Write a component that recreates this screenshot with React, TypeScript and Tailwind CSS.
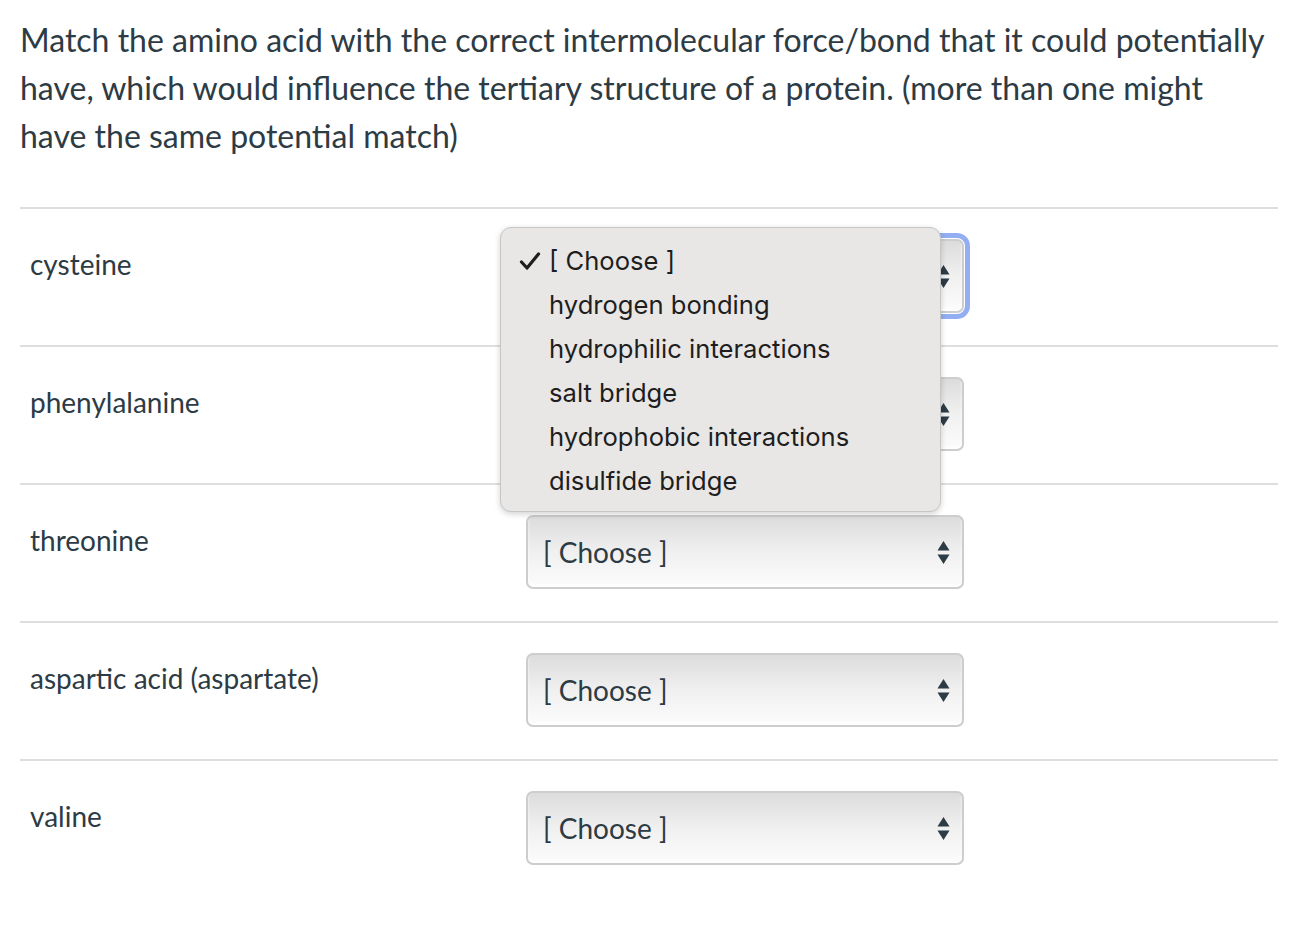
import React from "react";

const ROWS = [
  "cysteine",
  "phenylalanine",
  "threonine",
  "aspartic acid (aspartate)",
  "valine",
];

const OPTIONS = [
  "hydrogen bonding",
  "hydrophilic interactions",
  "salt bridge",
  "hydrophobic interactions",
  "disulfide bridge",
];

function Arrows() {
  return (
    <svg width="13" height="25" viewBox="0 0 13 25" className="shrink-0">
      <path d="M6.5 1 L12.5 10.5 L0.5 10.5 Z" fill="#2d3b45" />
      <path d="M6.5 24 L12.5 14.5 L0.5 14.5 Z" fill="#2d3b45" />
    </svg>
  );
}

function FakeSelect({ focused }: { focused?: boolean }) {
  return (
    <div
      className={`flex items-center justify-between w-[438px] h-[74px] rounded-[7px] border-2 border-[#cdcdcd] bg-linear-to-b from-[#dcdcdc] via-[#f0f0f0] to-[#fcfcfc] shadow-[inset_0_-2px_3px_rgba(255,255,255,0.9)] pl-[15px] pr-[12px] ${
        focused ? "outline-[5px] outline-solid outline-[#93aef2] outline-offset-[1px]" : ""
      }`}
    >
      <span className="text-[28px] text-[#2d3b45]">[ Choose ]</span>
      <Arrows />
    </div>
  );
}

function Menu() {
  return (
    <div className="absolute left-[-26px] top-[-12px] w-[441px] h-[285px] rounded-[11px] border border-[#c6c6c6] bg-[#e8e7e6] shadow-[0_2px_6px_rgba(0,0,0,0.18)] pt-[11px] z-10 font-['Inter','Noto_Sans',sans-serif] text-[25.6px] text-[#1e1e1e]">
      <div className="flex items-center h-[44px] pl-[18px]">
        <svg width="22" height="20" viewBox="0 0 22 20" className="mr-[8px]">
          <path d="M2.5 11 L8 17 L19.5 3" stroke="#1e1e1e" strokeWidth="3.2" fill="none" strokeLinecap="round" strokeLinejoin="round" />
        </svg>
        <span>[ Choose ]</span>
      </div>
      {OPTIONS.map((o) => (
        <div key={o} className="flex items-center h-[44px] pl-[48px]">
          {o}
        </div>
      ))}
    </div>
  );
}

export default function App() {
  return (
    <div className="min-h-screen bg-white font-['Lato','Liberation_Sans',sans-serif] text-[#2d3b45]">
      <div className="px-[20px] pt-[16px] w-[1298px]">
        <p className="w-[1252px] text-[32px] leading-[48px]">
          Match the amino acid with the correct intermolecular force/bond that it could potentially
          have, which would influence the tertiary structure of a protein. (more than one might have
          the same potential match)
        </p>
        <div className="mt-[47px]">
          {ROWS.map((label, i) => (
            <div key={label} className="flex items-start border-t-2 border-[#dedede] pt-[30px] pb-[32px]">
              <div className="w-[506px] pl-[10px] pt-[7px] text-[28px] leading-[36px]">{label}</div>
              <div className="relative">
                <FakeSelect focused={i === 0} />
                {i === 0 && <Menu />}
              </div>
            </div>
          ))}
        </div>
      </div>
    </div>
  );
}
